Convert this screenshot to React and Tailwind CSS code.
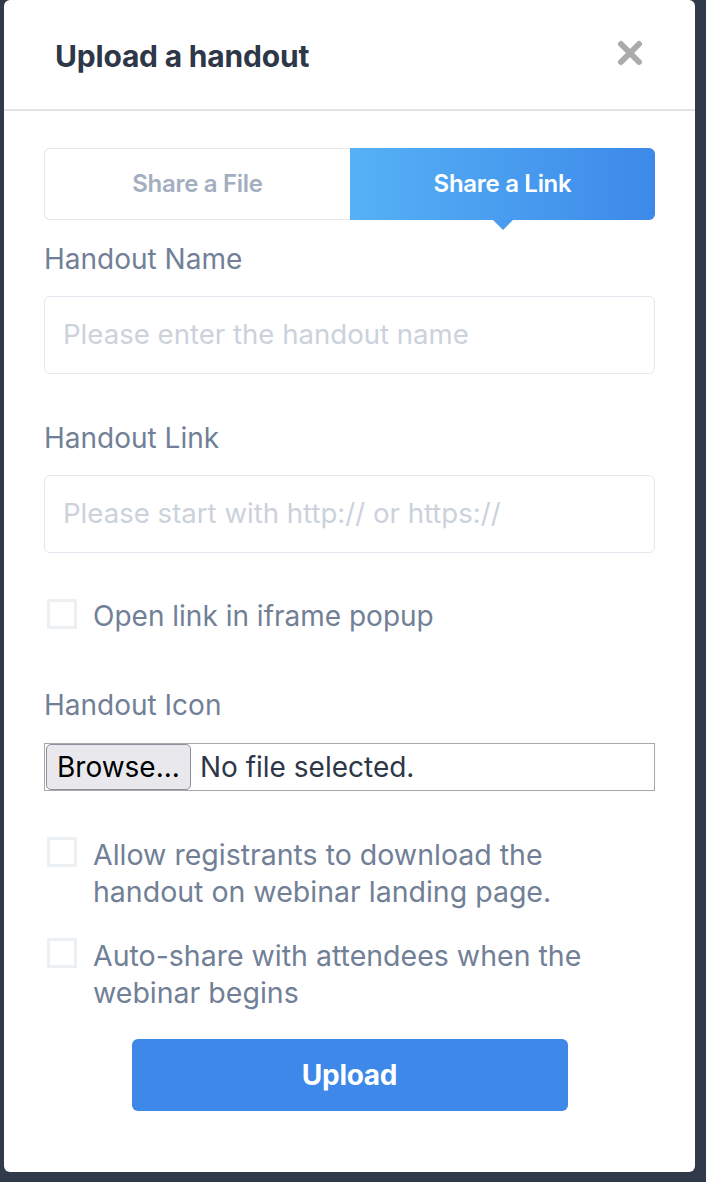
const Checkbox = () => (
  <div className="w-[30px] h-[30px] border-[3px] border-[#edf0f2] bg-white flex-shrink-0" />
);

const Label = ({ children, className = '' }) => (
  <p className={`text-[28px] leading-[36px] text-[#718096] ${className}`}>{children}</p>
);

const TextField = ({ placeholder, className = '' }) => (
  <div className={`h-[78px] border border-[#e2e8f0] rounded-[6px] flex items-center px-[18px] ${className}`}>
    <span className="text-[27.6px] text-[#cbd2dc]">{placeholder}</span>
  </div>
);

export default function App() {
  return (
    <div
      className="w-[706px] h-[1182px] bg-[#313a4a] pl-[4px] overflow-hidden"
      style={{ fontFamily: 'Inter, "Noto Sans", sans-serif' }}
    >
      <div className="w-[691px] h-[1172px] bg-white rounded-[6px]">
        {/* Header */}
        <div className="h-[111px] border-b-2 border-[#e3e3e8] flex items-center justify-between pl-[51px] pr-[52px]">
          <h1 className="text-[30px] font-bold text-[#2d3748] tracking-[-0.2px] pt-[3px]">Upload a handout</h1>
          <svg width="26" height="26" viewBox="0 0 26 26" className="mb-[4px]">
            <path d="M4 4L22 22M22 4L4 22" stroke="#ababab" strokeWidth="6" strokeLinecap="round" />
          </svg>
        </div>

        <div className="px-[40px]">
          {/* Tabs */}
          <div className="mt-[37px] flex h-[72px]">
            <div className="flex-1 border border-[#e6e9ee] border-r-0 rounded-l-[6px] flex items-center justify-center">
              <span className="text-[24px] font-semibold text-[#a3aec0] tracking-[-0.3px]">Share a File</span>
            </div>
            <div className="relative flex-1 rounded-r-[6px] bg-gradient-to-r from-[#56b1f5] to-[#3d89e9] flex items-center justify-center">
              <span className="text-[24px] font-semibold text-white tracking-[-0.3px]">Share a Link</span>
              <div className="absolute left-1/2 -translate-x-1/2 top-full w-0 h-0 border-l-[10px] border-r-[10px] border-t-[10px] border-l-transparent border-r-transparent border-t-[#4a9bef]" />
            </div>
          </div>

          <Label className="mt-[21px]">Handout Name</Label>
          <TextField placeholder="Please enter the handout name" className="mt-[19px]" />

          <Label className="mt-[46px]">Handout Link</Label>
          <TextField placeholder="Please start with http:// or https://" className="mt-[19px]" />

          <div className="mt-[46px] flex items-center gap-[16px] pl-[3px] h-[30px]">
            <Checkbox />
            <span className="text-[28px] leading-[30px] text-[#718096] pt-[4px]">Open link in iframe popup</span>
          </div>

          <Label className="mt-[58px]">Handout Icon</Label>
          <div className="mt-[20px] h-[48px] border border-[#a8a8a8] flex items-center pl-[1px] pr-[1px]">
            <div className="h-[46px] px-[10px] bg-[#e9e9ed] border border-[#8f8f9d] rounded-[5px] flex items-center">
              <span className="text-[28px] text-black">Browse...</span>
            </div>
            <span className="ml-[9px] text-[28px] text-[#2d3748]">No file selected.</span>
          </div>

          <div className="mt-[46px] flex items-start gap-[16px] pl-[3px]">
            <Checkbox />
            <p className="text-[28.5px] leading-[37px] text-[#718096] -mt-[1px]">
              Allow registrants to download the<br />handout on webinar landing page.
            </p>
          </div>

          <div className="mt-[28px] flex items-start gap-[16px] pl-[3px]">
            <Checkbox />
            <p className="text-[28.5px] leading-[37px] text-[#718096] -mt-[1px]">
              Auto-share with attendees when the<br />webinar begins
            </p>
          </div>

          <div className="mt-[28px] flex justify-center">
            <button className="w-[436px] h-[72px] bg-[#3d88e9] rounded-[6px] text-white text-[28px] font-bold tracking-[-0.3px]">
              Upload
            </button>
          </div>
        </div>
      </div>
    </div>
  );
}
